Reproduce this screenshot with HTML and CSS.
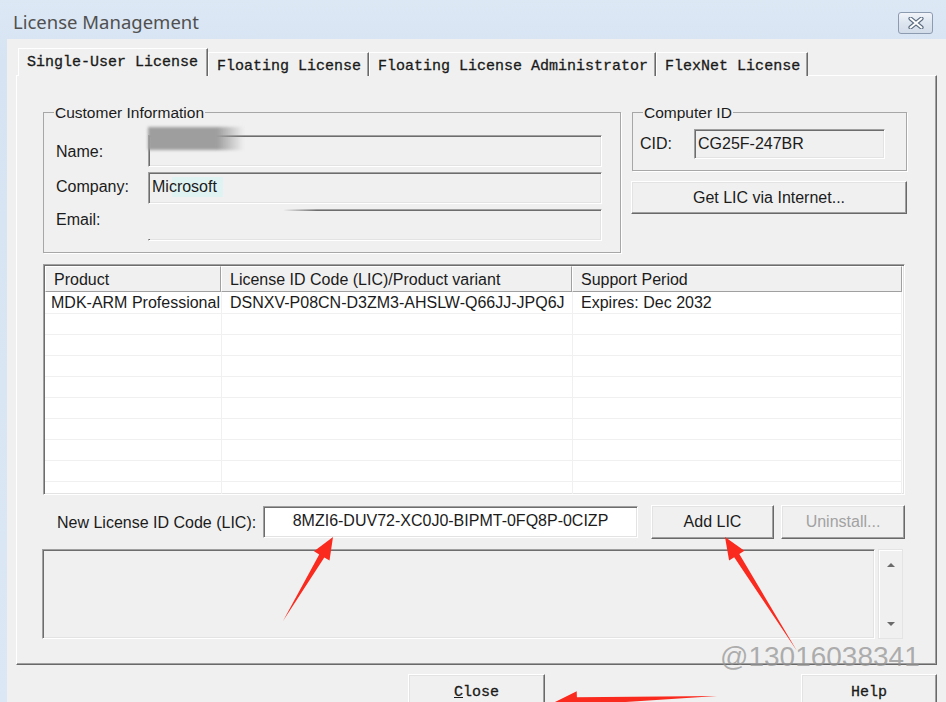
FILE: index.html
```html
<!DOCTYPE html>
<html>
<head>
<meta charset="utf-8">
<title>License Management</title>
<link rel="stylesheet" href="styles.css">
</head>
<body>
<div class="window">
  <div class="titlebar">
    <span class="title">License Management</span>
    <div class="xbtn">
      <svg width="16" height="12" viewBox="0 0 16 12">
        <path d="M2.5 1.5 L13.5 10.5 M13.5 1.5 L2.5 10.5" stroke="#5b6b80" stroke-width="4.2" stroke-linecap="round" fill="none"/>
        <path d="M2.5 1.5 L13.5 10.5 M13.5 1.5 L2.5 10.5" stroke="#ffffff" stroke-width="2" stroke-linecap="round" fill="none"/>
      </svg>
    </div>
  </div>
  <div class="frame">
    <div class="client">
      <div class="tabs">
        <div class="tab active">Single-User License</div>
        <div class="tab">Floating License</div>
        <div class="tab">Floating License Administrator</div>
        <div class="tab">FlexNet License</div>
      </div>
      <div class="panel">
        <div class="top">
          <fieldset class="group cust">
            <legend>Customer Information</legend>
            <div class="frow first">
              <span class="flabel">Name:</span>
              <div class="edit"><span class="redact"></span></div>
            </div>
            <div class="frow">
              <span class="flabel mid">Company:</span>
              <div class="edit"><span class="company">Microsoft</span></div>
            </div>
            <div class="frow">
              <span class="flabel up">Email:</span>
              <div class="edit"><span class="redact2"></span></div>
            </div>
          </fieldset>
          <div class="rightcol">
            <fieldset class="group cid">
              <legend>Computer ID</legend>
              <div class="cidrow">
                <span class="cidlabel">CID:</span>
                <div class="edit cidedit">CG25F-247BR</div>
              </div>
            </fieldset>
            <div class="btn getlic">Get LIC via Internet...</div>
          </div>
        </div>

        <div class="list">
          <div class="lhead">
            <div class="hcell">Product</div>
            <div class="hcell">License ID Code (LIC)/Product variant</div>
            <div class="hcell">Support Period</div>
          </div>
          <div class="lrow r1"><div class="lcell">MDK-ARM Professional</div><div class="lcell c2">DSNXV-P08CN-D3ZM3-AHSLW-Q66JJ-JPQ6J</div><div class="lcell c2">Expires: Dec 2032</div></div>
          <div class="lrow"><div class="lcell"></div><div class="lcell"></div><div class="lcell"></div></div>
          <div class="lrow"><div class="lcell"></div><div class="lcell"></div><div class="lcell"></div></div>
          <div class="lrow"><div class="lcell"></div><div class="lcell"></div><div class="lcell"></div></div>
          <div class="lrow"><div class="lcell"></div><div class="lcell"></div><div class="lcell"></div></div>
          <div class="lrow"><div class="lcell"></div><div class="lcell"></div><div class="lcell"></div></div>
          <div class="lrow"><div class="lcell"></div><div class="lcell"></div><div class="lcell"></div></div>
          <div class="lrow"><div class="lcell"></div><div class="lcell"></div><div class="lcell"></div></div>
          <div class="lrow"><div class="lcell"></div><div class="lcell"></div><div class="lcell"></div></div>
          <div class="lrow"><div class="lcell"></div><div class="lcell"></div><div class="lcell"></div></div>
        </div>

        <div class="licrow">
          <span class="liclabel">New License ID Code (LIC):</span>
          <div class="licinput">8MZI6-DUV72-XC0J0-BIPMT-0FQ8P-0CIZP</div>
          <div class="btn addlic">Add LIC</div>
          <div class="btn uninstall">Uninstall...</div>
        </div>

        <div class="outrow">
          <div class="output"></div>
          <div class="vscroll">
            <span class="arr aup"></span>
            <span class="arr adown"></span>
          </div>
        </div>
      </div>

      <div class="bottom">
        <div class="btn mono closebtn"><span class="u">C</span>lose</div>
        <div class="btn mono helpbtn">Help</div>
      </div>
    </div>
  </div>

  <div class="watermark">@13016038341</div>

  <svg class="arrows" width="946" height="702" viewBox="0 0 946 702">
    <polygon fill="#fa2a1e" points="283,621 324.3,557.4 329.5,560.5 333,537 314,551.3 319.2,554.4"/>
    <polygon fill="#fa2a1e" points="797,651 739.3,554 744.4,550.8 725,537 729.1,560.4 734.2,557.2"/>
    <polygon fill="#fa2a1e" points="717,696 576.9,697.2 576.7,691.2 555,702 577.3,712.2 577.1,705.2"/>
  </svg>
</div>
</body>
</html>
```
FILE: styles.css
```css
* { box-sizing: border-box; }
html, body { margin: 0; padding: 0; }
body {
  width: 946px;
  height: 702px;
  overflow: hidden;
  font-family: "Liberation Sans", Arial, sans-serif;
  font-size: 16px;
  color: #1b1b1b;
}
.window {
  position: relative;
  width: 946px;
  height: 702px;
  overflow: hidden;
  background: linear-gradient(#dde8f5, #d6e3f2 60px, #dbe7f4);
}
.titlebar {
  height: 39px;
  display: flex;
  justify-content: space-between;
  align-items: flex-start;
  padding: 0 13px;
}
.title {
  font-family: "Noto Sans", "Open Sans", sans-serif;
  font-size: 18.5px;
  line-height: 24px;
  margin-top: 10px;
  color: #505050;
}
.xbtn {
  margin-top: 12px;
  width: 35px;
  height: 22px;
  border: 1px solid #8c9bb0;
  border-radius: 3px;
  background: linear-gradient(#f2f5fa, #dde5ef 50%, #d2dce9);
  display: flex;
  align-items: center;
  justify-content: center;
}
.frame {
  padding-left: 7px;
  height: 663px;
}
.client {
  background: #f0f0f0;
  height: 663px;
  padding: 10px 9px 0 9px;
}
.tabs {
  display: flex;
  align-items: flex-end;
  height: 27px;
  margin-left: 2px;
  position: relative;
  z-index: 2;
  margin-bottom: -1px;
}
.tab {
  font-family: "Liberation Mono", "Courier New", monospace;
  font-size: 15px;
  font-weight: normal;
  -webkit-text-stroke: 0.3px #1a1a1a;
  color: #1a1a1a;
  height: 24px;
  padding: 3px 7px 0 8px;
  border-top: 1px solid #fff;
  border-left: 1px solid #fff;
  border-right: 1px solid #696969;
  box-shadow: inset -1px 0 0 #a0a0a0;
  display: flex;
  align-items: center;
  background: #f0f0f0;
}
.tab.active {
  height: 28px;
  padding: 0 9px 0 8px;
}
.panel {
  width: 921px;
  height: 590px;
  border-top: 1px solid #fff;
  border-left: 1px solid #fff;
  border-right: 1px solid #696969;
  border-bottom: 1px solid #696969;
  box-shadow: inset -1px -1px 0 #a0a0a0;
  padding: 28px 0 0 26px;
}
.top {
  display: flex;
  align-items: flex-start;
  gap: 11px;
}
fieldset.group {
  margin: 0;
  border: 1px solid #a7a7a7;
  box-shadow: 1px 1px 0 #fff;
}
fieldset.group legend {
  font-size: 15.5px;
  line-height: 17px;
  padding: 0 1px;
  color: #1b1b1b;
}
.cust {
  width: 578px;
  padding: 14px 18px 11px 12px;
}
.cust legend { margin-left: -2px; }
.frow {
  display: flex;
  align-items: center;
  height: 32px;
  margin-top: 5px;
}
.frow.first { margin-top: 0; }
.flabel {
  width: 92px;
  flex: none;
  padding-top: 2px;
}
.flabel.mid {
  padding-top: 0;
  margin-top: -3px;
}
.flabel.up {
  padding-top: 0;
  margin-top: -10px;
}
.edit {
  position: relative;
  width: 454px;
  height: 32px;
  background: #f0f0f0;
  border: 1px solid;
  border-color: #a0a0a0 #fff #fff #a0a0a0;
  box-shadow: inset 1px 1px 0 #6d6d6d, inset -1px -1px 0 #e3e3e3;
  display: flex;
  align-items: center;
  padding-left: 3px;
}
.company {
  background: linear-gradient(90deg, rgba(240,240,240,0) 0 28%, #e0f3f3 28% 100%);
  padding-right: 6px;
  line-height: 20px;
  margin-top: -3px;
}
.redact {
  position: absolute;
  left: -1px;
  top: -9px;
  width: 96px;
  height: 23px;
  background: linear-gradient(90deg, #9e9e9e 0 72%, rgba(160,160,160,0) 100%);
  filter: blur(1.5px);
}
.redact2 {
  position: absolute;
  left: -2px;
  top: -2px;
  width: 170px;
  height: 31px;
  background: linear-gradient(90deg, #f0f0f0 0 80%, rgba(240,240,240,0) 100%);
}
.rightcol {
  width: 276px;
  display: flex;
  flex-direction: column;
}
.cid {
  width: 275px;
  padding: 8px 10px 11px 7px;
}
.cid legend { margin-left: 3px; }
.cidrow {
  display: flex;
  align-items: center;
}
.cidlabel {
  width: 54px;
  flex: none;
}
.cidedit {
  width: 191px;
  height: 30px;
  padding-left: 3px;
}
.btn {
  background: #f0f0f0;
  border: 1px solid;
  border-color: #fff #696969 #696969 #fff;
  box-shadow: inset -1px -1px 0 #a0a0a0, inset 1px 1px 0 #e3e3e3;
  display: flex;
  align-items: center;
  justify-content: center;
  color: #1b1b1b;
}
.getlic {
  margin-top: 10px;
  width: 276px;
  height: 33px;
  margin-left: -1px;
}
.list {
  margin-top: 11px;
  width: 862px;
  height: 231px;
  overflow: hidden;
  background: #fff;
  border: 1px solid;
  border-color: #a0a0a0 #fff #fff #a0a0a0;
  box-shadow: inset 1px 1px 0 #6d6d6d, inset -1px -1px 0 #e3e3e3;
  padding: 1px 2px 1px 1px;
}
.lhead {
  display: grid;
  grid-template-columns: 176px 351px 330px;
  height: 26px;
  background: #f0f0f0;
}
.lrow {
  display: grid;
  grid-template-columns: 177px 351px 1fr;
  height: 21px;
  border-bottom: 1px solid #f0f0f0;
}
.lrow.r1 { height: 22px; }
.hcell {
  border-top: 1px solid #fff;
  border-left: 1px solid #fff;
  border-right: 1px solid #a0a0a0;
  border-bottom: 1px solid #a0a0a0;
  padding-left: 8px;
  display: flex;
  align-items: center;
  padding-top: 1px;
}
.lcell {
  border-right: 1px solid #f0f0f0;
  padding-left: 6px;
  display: flex;
  align-items: center;
  white-space: nowrap;
}
.lcell.c2 { padding-left: 8px; }
.licrow {
  margin-top: 10px;
  display: flex;
  align-items: center;
  height: 34px;
}
.liclabel {
  margin-left: 14px;
  width: 206px;
  flex: none;
  padding-top: 2px;
}
.licinput {
  width: 375px;
  height: 32px;
  background: #fff;
  border: 1px solid;
  border-color: #a0a0a0 #fff #fff #a0a0a0;
  box-shadow: inset 1px 1px 0 #6d6d6d, inset -1px -1px 0 #e3e3e3;
  display: flex;
  align-items: center;
  justify-content: center;
  padding-bottom: 2px;
}
.addlic {
  margin-left: 13px;
  width: 123px;
  height: 34px;
}
.uninstall {
  margin-left: 7px;
  width: 124px;
  height: 34px;
  color: #a2a2a2;
}
.outrow {
  margin-top: 10px;
  display: flex;
  gap: 3px;
  margin-left: -1px;
}
.output {
  width: 833px;
  height: 90px;
  background: #f0f0f0;
  border: 1px solid;
  border-color: #a0a0a0 #fff #fff #a0a0a0;
  box-shadow: inset 1px 1px 0 #6d6d6d, inset -1px -1px 0 #e3e3e3;
}
.vscroll {
  width: 25px;
  height: 90px;
  border: 1px solid #e4e4e4;
  box-shadow: inset 1px 1px 0 #fff;
  background: #f0f0f0;
  display: flex;
  flex-direction: column;
  align-items: center;
  justify-content: space-between;
  padding: 13px 0 12px;
}
.arr {
  width: 0;
  height: 0;
  border-left: 4px solid transparent;
  border-right: 4px solid transparent;
}
.arr.aup { border-bottom: 4px solid #6a6a6a; }
.arr.adown { border-top: 4px solid #6a6a6a; }
.bottom {
  margin-top: 9px;
  display: flex;
  padding-left: 392px;
  gap: 256px;
}
.mono {
  font-family: "Liberation Mono", "Courier New", monospace;
  -webkit-text-stroke: 0.3px #1a1a1a;
  font-size: 15px;
  color: #1a1a1a;
}
.closebtn, .helpbtn {
  width: 137px;
  height: 36px;
  align-items: flex-start;
  padding-top: 9px;
}
.helpbtn { width: 136px; }
.u { text-decoration: underline; }
.watermark {
  position: absolute;
  left: 720px;
  top: 641px;
  font-family: "Liberation Sans", Arial, sans-serif;
  font-size: 28px;
  color: rgba(150, 150, 150, 0.75);
}
.arrows {
  position: absolute;
  left: 0;
  top: 0;
  pointer-events: none;
}
```
